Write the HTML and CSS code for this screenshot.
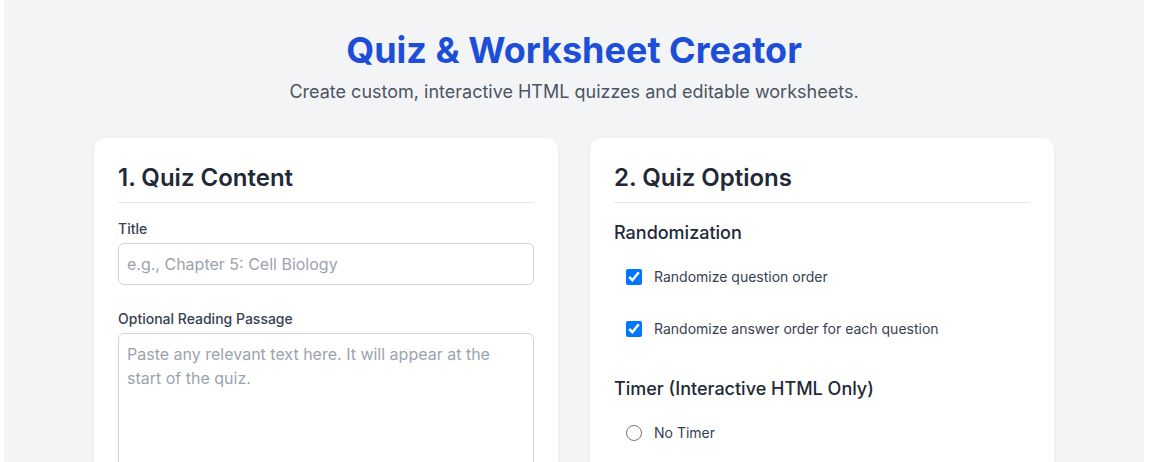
FILE: index.html
```html
<!DOCTYPE html>
<html>
<head>
  <meta charset="UTF-8">
  <title>Quiz &amp; Worksheet Creator</title>
  <link rel="stylesheet" href="styles.css">
</head>
<body>
  <div class="page">
    <div class="container">
      <div class="header">
        <h1>Quiz &amp; Worksheet Creator</h1>
        <p>Create custom, interactive HTML quizzes and editable worksheets.</p>
      </div>

      <div class="panels">
        <div class="card">
          <h2 class="card-title">1. Quiz Content</h2>

          <div class="field">
            <label for="quizTitle">Title</label>
            <input id="quizTitle" type="text" placeholder="e.g., Chapter 5: Cell Biology">
          </div>

          <div class="field">
            <label for="passage">Optional Reading Passage</label>
            <textarea id="passage" rows="8" placeholder="Paste any relevant text here. It will appear at the start of the quiz."></textarea>
          </div>
        </div>

        <div class="card">
          <h2 class="card-title">2. Quiz Options</h2>

          <div class="option-group">
            <h3>Randomization</h3>
            <label class="option">
              <input type="checkbox" checked>
              <span>Randomize question order</span>
            </label>
            <label class="option">
              <input type="checkbox" checked>
              <span>Randomize answer order for each question</span>
            </label>
          </div>

          <div class="option-group">
            <h3>Timer (Interactive HTML Only)</h3>
            <label class="option">
              <input type="radio" name="timer">
              <span>No Timer</span>
            </label>
          </div>
        </div>
      </div>
    </div>
  </div>
</body>
</html>
```

FILE: styles.css
```css
body {
  margin: 0;
  padding: 0;
  background: #fff;
  font-family: Inter, 'Noto Sans', Arial, sans-serif;
  color: #1f2937;
}

.page {
  margin: 0 6px 0 4px;
  min-height: 100vh;
  background: #f3f4f6;
}

.container {
  max-width: 960px;
  margin: 0 auto;
  padding: 30px 0 32px;
}

.header {
  text-align: center;
  margin-bottom: 32px;
}

.header h1 {
  margin: 0 0 8px 0;
  font-size: 36px;
  line-height: 40px;
  font-weight: 700;
  color: #1d4ed8;
}

.header p {
  margin: 0;
  font-size: 18px;
  line-height: 28px;
  color: #4b5563;
}

.panels {
  display: grid;
  grid-template-columns: 1fr 1fr;
  gap: 32px;
}

.card {
  background: white;
  border-radius: 12px;
  padding: 24px;
  box-shadow: 0 1px 3px rgba(0, 0, 0, 0.06), 0 1px 2px rgba(0, 0, 0, 0.04);
}

.card-title {
  margin: 0 0 16px 0;
  padding-bottom: 8px;
  font-size: 24px;
  line-height: 32px;
  font-weight: 600;
  color: #1f2937;
  border-bottom: 1px solid #e5e7eb;
}

.field {
  margin-bottom: 24px;
}

.field label {
  display: block;
  margin-bottom: 4px;
  font-size: 14px;
  line-height: 20px;
  font-weight: 500;
  color: #374151;
}

.field input,
.field textarea {
  display: block;
  width: 100%;
  box-sizing: border-box;
  padding: 8px;
  border: 1px solid #d1d5db;
  border-radius: 6px;
  font-family: inherit;
  font-size: 16px;
  line-height: 24px;
  color: #1f2937;
  background: white;
  resize: vertical;
}

.field input::placeholder,
.field textarea::placeholder {
  color: #9ca3af;
}

.option-group {
  margin-bottom: 24px;
}

.option-group h3 {
  margin: 0 0 8px 0;
  font-size: 18px;
  line-height: 28px;
  font-weight: 500;
  color: #1f2937;
}

.option {
  display: flex;
  align-items: center;
  gap: 12px;
  padding: 12px;
  margin-bottom: 8px;
  border-radius: 6px;
  font-size: 14px;
  line-height: 20px;
  color: #374151;
}

.option input {
  width: 16px;
  height: 16px;
  margin: 0;
  accent-color: #0075ff;
}
```
